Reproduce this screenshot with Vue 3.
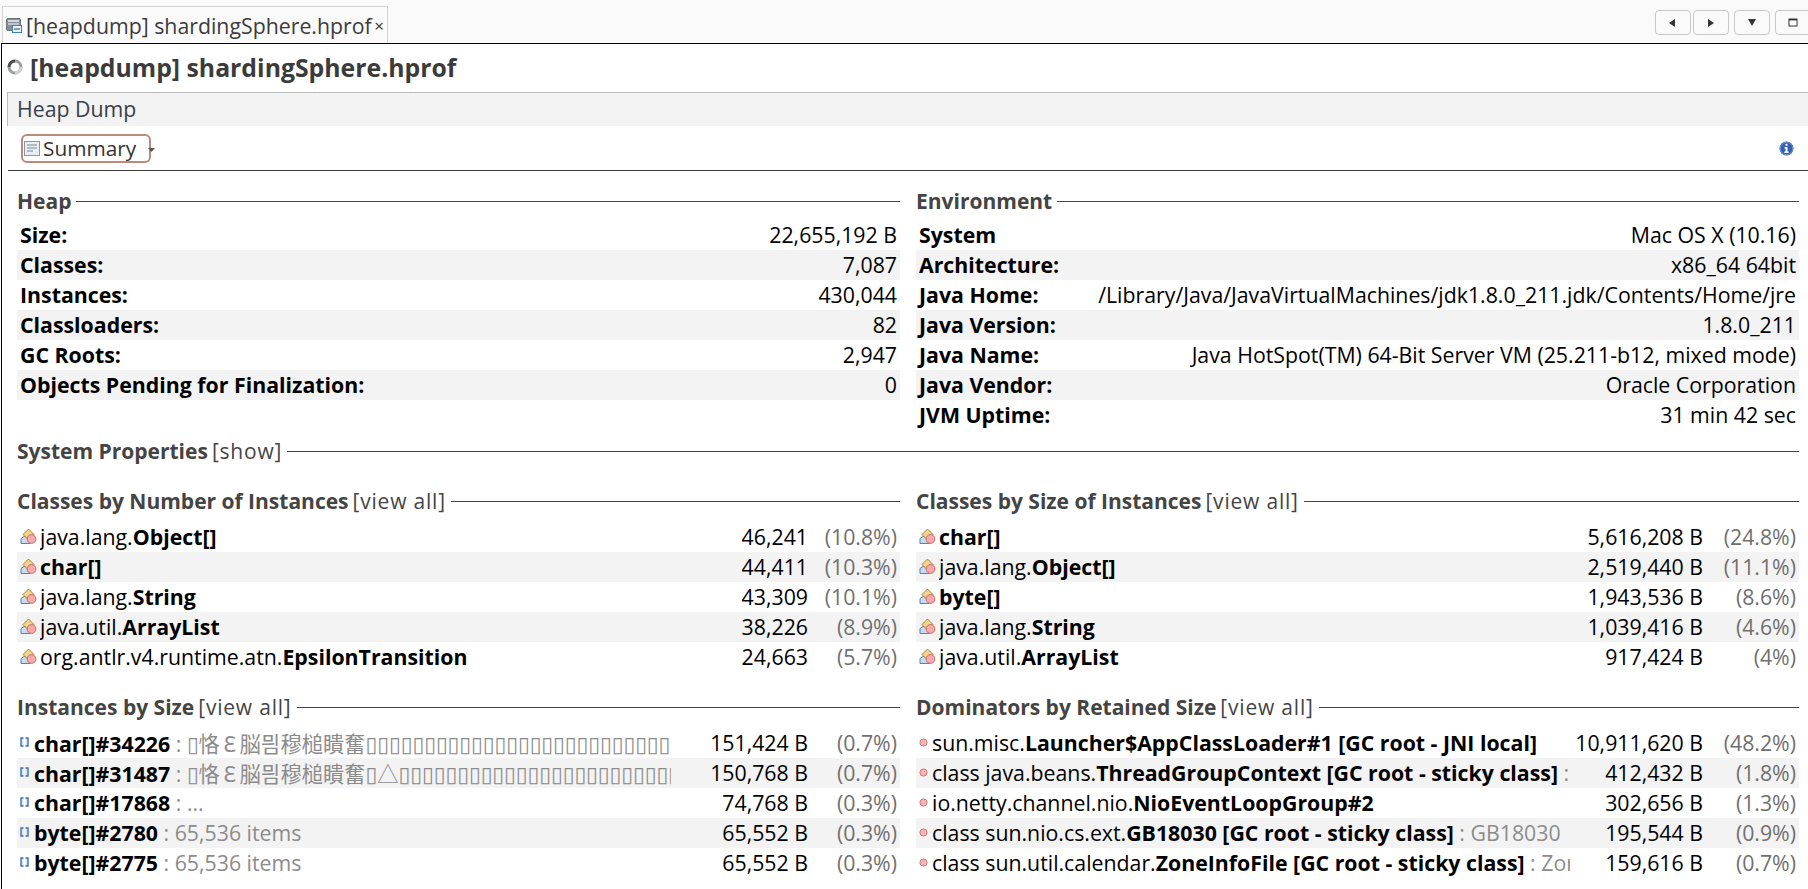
<script setup>
const heap = [
  ['Size:', '22,655,192 B'], ['Classes:', '7,087'], ['Instances:', '430,044'],
  ['Classloaders:', '82'], ['GC Roots:', '2,947'], ['Objects Pending for Finalization:', '0'],
]
const env = [
  ['System', 'Mac OS X (10.16)'], ['Architecture:', 'x86_64 64bit'],
  ['Java Home:', '/Library/Java/JavaVirtualMachines/jdk1.8.0_211.jdk/Contents/Home/jre'],
  ['Java Version:', '1.8.0_211'],
  ['Java Name:', 'Java HotSpot(TM) 64-Bit Server VM (25.211-b12, mixed mode)'],
  ['Java Vendor:', 'Oracle Corporation'], ['JVM Uptime:', '31 min 42 sec'],
]
const byCount = [
  ['java.lang.', 'Object[]', '46,241', '(10.8%)'], ['', 'char[]', '44,411', '(10.3%)'],
  ['java.lang.', 'String', '43,309', '(10.1%)'], ['java.util.', 'ArrayList', '38,226', '(8.9%)'],
  ['org.antlr.v4.runtime.atn.', 'EpsilonTransition', '24,663', '(5.7%)'],
]
const bySize = [
  ['', 'char[]', '5,616,208 B', '(24.8%)'], ['java.lang.', 'Object[]', '2,519,440 B', '(11.1%)'],
  ['', 'byte[]', '1,943,536 B', '(8.6%)'], ['java.lang.', 'String', '1,039,416 B', '(4.6%)'],
  ['java.util.', 'ArrayList', '917,424 B', '(4%)'],
]
const tofu = '▯'.repeat(40)
const instances = [
  ['char[]#34226', ' : ▯恪\u2009Ɛ\u2009脳믬穆槌瞶奮' + tofu, '151,424 B', '(0.7%)'],
  ['char[]#31487', ' : ▯恪\u2009Ɛ\u2009脳믬穆槌瞶奮▯△' + tofu, '150,768 B', '(0.7%)'],
  ['char[]#17868', ' : ...', '74,768 B', '(0.3%)'],
  ['byte[]#2780', ' : 65,536 items', '65,552 B', '(0.3%)'],
  ['byte[]#2775', ' : 65,536 items', '65,552 B', '(0.3%)'],
]
const doms = [
  ['sun.misc.', 'Launcher$AppClassLoader#1 [GC root - JNI local]', '', '10,911,620 B', '(48.2%)'],
  ['class java.beans.', 'ThreadGroupContext [GC root - sticky class]', ' : ThreadGroupContext', '412,432 B', '(1.8%)'],
  ['io.netty.channel.nio.', 'NioEventLoopGroup#2', '', '302,656 B', '(1.3%)'],
  ['class sun.nio.cs.ext.', 'GB18030 [GC root - sticky class]', ' : GB18030', '195,544 B', '(0.9%)'],
  ['class sun.util.calendar.', 'ZoneInfoFile [GC root - sticky class]', ' : ZoneInfoFile', '159,616 B', '(0.7%)'],
]
</script>

<template>
  <div class="app">
    <div class="tabbar">
      <div class="tab">
        <svg class="tabicon" width="16" height="16" viewBox="0 0 16 16">
          <rect x="0.5" y="1.5" width="14" height="12" rx="1.5" fill="#8a8f95" stroke="#6d7278"/>
          <rect x="2" y="3" width="11" height="2" fill="#d5d8da"/>
          <rect x="2" y="6" width="11" height="2" fill="#c2c6c9"/>
          <rect x="6.5" y="8.5" width="9" height="7" fill="#eaf2fb" stroke="#3f7fc1"/>
          <rect x="8" y="11" width="6" height="2" fill="#6fa2d8"/>
        </svg>
        <span>[heapdump] shardingSphere.hprof</span>
        <span class="close">×</span>
      </div>
      <div class="tabtools">
        <button class="tool"><svg width="8" height="8" viewBox="0 0 8 8"><path d="M6 0v8L0 4z" fill="#333"/></svg></button>
        <button class="tool"><svg width="8" height="8" viewBox="0 0 8 8"><path d="M1 0v8l6-4z" fill="#333"/></svg></button>
        <button class="tool gap"><svg width="9" height="7" viewBox="0 0 9 7"><path d="M0 0h8L4 7z" fill="#333"/></svg></button>
        <button class="tool gap cut"><svg width="10" height="9" viewBox="0 0 10 9"><rect x="1" y="1" width="8" height="7" fill="#fff" stroke="#333"/><rect x="1" y="1" width="8" height="1.4" fill="#333"/></svg></button>
      </div>
    </div>

    <div class="frame">
      <div class="title">
        <svg width="16" height="16" viewBox="0 0 16 16">
          <circle cx="8" cy="8" r="6" fill="none" stroke="#9a9da1" stroke-width="3"/>
          <path d="M2 8A6 6 0 0 1 8 2" fill="none" stroke="#4a4d51" stroke-width="3"/>
          <path d="M14 8A6 6 0 0 1 8 14" fill="none" stroke="#cfd1d3" stroke-width="3"/>
        </svg>
        <span>[heapdump] shardingSphere.hprof</span>
      </div>
      <div class="subtabs">Heap Dump</div>
      <div class="toolbar">
        <div class="summary">
          <svg width="17" height="17" viewBox="0 0 17 17">
            <rect x="0.5" y="1.5" width="15" height="14" fill="#e9eef4" stroke="#8b97a5"/>
            <path d="M3 5h10M3 8h10M3 11h6" stroke="#7d8894" stroke-width="1"/>
          </svg>
          <span>Summary</span>
        </div>
        <svg class="caret" width="7" height="4" viewBox="0 0 7 4"><path d="M0 0h7L3.5 4z" fill="#555"/></svg>
        <svg class="info" width="15" height="15" viewBox="0 0 15 15">
          <circle cx="7.5" cy="7.5" r="7" fill="#2f5fae"/>
          <circle cx="7.5" cy="7.5" r="6.2" fill="none" stroke="#7d9fd8" stroke-width="0.8"/>
          <rect x="6.5" y="2.8" width="2" height="2" fill="#fff"/>
          <path d="M5.5 6h3v4.5h1.2V12H5.3v-1.5h1.2V7.4h-1z" fill="#fff"/>
        </svg>
      </div>

      <div class="content">
        <div class="cols first">
          <section class="col">
            <h3 class="head"><b>Heap</b></h3>
            <div v-for="r in heap" :key="r[0]" class="row kv">
              <b>{{ r[0] }}</b><span>{{ r[1] }}</span>
            </div>
          </section>
          <section class="col">
            <h3 class="head"><b>Environment</b></h3>
            <div v-for="r in env" :key="r[0]" class="row kv">
              <b>{{ r[0] }}</b><span>{{ r[1] }}</span>
            </div>
          </section>
        </div>

        <h3 class="head sys"><b>System Properties</b> <span class="lnk">[show]</span></h3>

        <div class="cols second">
          <section class="col">
            <h3 class="head"><b>Classes by Number of Instances</b> <span class="lnk">[view all]</span></h3>
            <div v-for="r in byCount" :key="r[2]" class="row item">
              <svg class="cls" width="17" height="17" viewBox="0 0 17 17">
                <path d="M1 15.5v-5l3-2h6v7z" fill="#c6dcf1" stroke="#5f7f9f"/>
                <path d="M8.5 1l5.5 5.5-5.5 5.5L3 6.5z" fill="#f3d48b" stroke="#a9843a"/>
                <circle cx="11.5" cy="11" r="4.4" fill="#f6aaaa" stroke="#c96a6a"/>
              </svg>
              <span class="name">{{ r[0] }}<b>{{ r[1] }}</b></span>
              <span class="num">{{ r[2] }}</span><span class="pct">{{ r[3] }}</span>
            </div>
          </section>
          <section class="col right">
            <h3 class="head"><b>Classes by Size of Instances</b> <span class="lnk">[view all]</span></h3>
            <div v-for="r in bySize" :key="r[2]" class="row item">
              <svg class="cls" width="17" height="17" viewBox="0 0 17 17">
                <path d="M1 15.5v-5l3-2h6v7z" fill="#c6dcf1" stroke="#5f7f9f"/>
                <path d="M8.5 1l5.5 5.5-5.5 5.5L3 6.5z" fill="#f3d48b" stroke="#a9843a"/>
                <circle cx="11.5" cy="11" r="4.4" fill="#f6aaaa" stroke="#c96a6a"/>
              </svg>
              <span class="name">{{ r[0] }}<b>{{ r[1] }}</b></span>
              <span class="num">{{ r[2] }}</span><span class="pct">{{ r[3] }}</span>
            </div>
          </section>
        </div>

        <div class="cols third">
          <section class="col">
            <h3 class="head"><b>Instances by Size</b> <span class="lnk">[view all]</span></h3>
            <div v-for="r in instances" :key="r[0]" class="row item">
              <svg class="arr" width="9" height="10" viewBox="0 0 9 10">
                <path d="M3.5 1H1v8h2.5M5.5 1H8v8H5.5" fill="#dbe7f5" stroke="#3f6fb0" stroke-width="1.4"/>
              </svg>
              <span class="name clip"><b>{{ r[0] }}</b><i>{{ r[1] }}</i></span>
              <span class="num">{{ r[2] }}</span><span class="pct">{{ r[3] }}</span>
            </div>
          </section>
          <section class="col right">
            <h3 class="head"><b>Dominators by Retained Size</b> <span class="lnk">[view all]</span></h3>
            <div v-for="r in doms" :key="r[1]" class="row item dom">
              <svg class="dot" width="9" height="9" viewBox="0 0 9 9">
                <circle cx="4.5" cy="4.5" r="3.6" fill="#f6b3b3" stroke="#c27a7a"/>
              </svg>
              <span class="name clip">{{ r[0] }}<b>{{ r[1] }}</b><i>{{ r[2] }}</i></span>
              <span class="num">{{ r[3] }}</span><span class="pct">{{ r[4] }}</span>
            </div>
          </section>
        </div>
      </div>
    </div>
  </div>
</template>

<style>
html, body { margin: 0; background: #fff; }
</style>

<style scoped>
.app {
  width: 1808px; height: 889px; overflow: hidden; background: #fafafa;
  font-family: "Open Sans", "Noto Sans", "Noto Sans CJK SC", "DejaVu Sans", sans-serif;
  font-size: 21.3px; color: #000;
}
.tabbar { height: 43px; display: flex; align-items: flex-end; justify-content: space-between; }
.tab {
  height: 37px; margin-left: 2px; padding: 0 3px 0 3px; width: 386px; box-sizing: border-box;
  border: 1px solid #d4d4d4; border-bottom: 0; display: flex; align-items: center;
  color: #3c3c3c; background: #fafafa; white-space: nowrap;
}
.tabicon { margin-right: 4px; flex: none; }
.close { margin-left: auto; font-size: 17px; color: #333; }
.tabtools { display: flex; align-self: flex-start; margin-top: 10px; }
.tool {
  width: 36px; height: 25px; padding: 0; margin-right: 2px; background: #fafafa; flex: none;
  border: 1px solid #c8c8c8; border-radius: 4px; display: flex; align-items: center; justify-content: center;
}
.tool.gap { margin-left: 3px; }
.tool.cut { margin-right: -3px; }
.frame { height: 846px; margin-left: 1px; box-sizing: border-box; border-top: 1px solid #000; border-left: 1px solid #000; background: #fff; }
.title { height: 45px; display: flex; align-items: center; gap: 7px; padding-left: 5px; font-size: 24.8px; font-weight: 700; color: #3b3b3b; box-sizing: border-box; margin-bottom: 3px; }
.subtabs { margin-left: 5px; height: 34px; box-sizing: border-box; background: #f3f3f3; border-top: 1px solid #bcbcbc; border-left: 1px solid #bcbcbc; padding-left: 9px; line-height: 32px; color: #37404a; }
.toolbar { margin-left: 6px; height: 45px; box-sizing: border-box; border-bottom: 1px solid #3c3c3c; display: flex; align-items: center; position: relative; padding: 0 14px 0 13px; }
.summary { width: 130px; height: 29px; box-sizing: border-box; border: 2px solid #bb8a7c; border-radius: 6px; display: flex; align-items: center; gap: 2px; color: #333; font-size: 20.8px; }
.summary svg { margin-left: 1px; flex: none; }
.caret { margin-left: -3px; margin-top: 3px; }
.info { margin-left: auto; }
.content { padding: 0 7px 0 15px; }
.cols { display: grid; grid-template-columns: 883px 883px; column-gap: 16px; }
.first { margin-top: 17px; }
.second { margin-top: 24px; }
.third { margin-top: 22px; }
.head {
  margin: 0; font-size: 21px; font-weight: 400; height: 26px; line-height: 26px;
  display: flex; align-items: center; gap: 5px; color: #3c3c3c; white-space: pre;
}
.head b { font-weight: 700; color: #444; }
.head::after { content: ""; flex: 1; height: 1px; background: #444; }
.head .lnk { margin-left: -1px; color: #444; letter-spacing: 0.8px; }
.sys { margin-top: 8px; width: 1782px; }
.col > .head { margin-bottom: 6px; }
.second .col > .head, .third .col > .head { margin-bottom: 8px; }
.row { height: 30px; display: flex; align-items: center; padding: 0 3px 2px; white-space: nowrap; box-sizing: border-box; }
.row:nth-child(odd) { background: #f3f3f3; }
.kv { justify-content: space-between; }
.kv b { font-weight: 700; }
.cls { flex: none; margin-right: 3px; }
.arr { flex: none; margin: 0 5px 0 0; }
.dot { flex: none; margin: 0 4px 0 0; }
.name { flex: 1; min-width: 0; overflow: hidden; }
.name i { font-style: normal; color: #8c8c8c; }
.clip { flex: none; width: 637px; }
.dom .clip { width: 638px; }
.num { margin-left: auto; text-align: right; }
.pct { width: 89px; flex: none; text-align: right; color: #707070; }
.right .pct { width: 93px; }
</style>
